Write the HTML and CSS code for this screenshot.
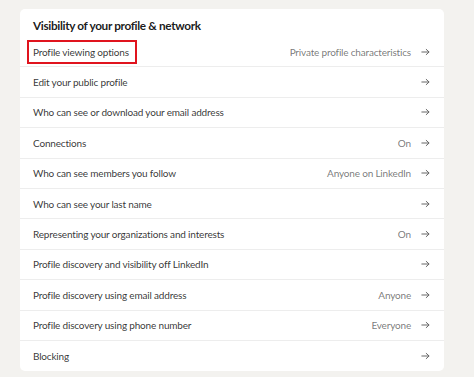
FILE: index.html
```html
<!DOCTYPE html>
<html lang="en">
<head>
    <meta charset="UTF-8">
    <title>Settings: Visibility</title>
    <meta name="viewport" content="width=device-width, initial-scale=1">
    <link rel="stylesheet" href="styles.css">
</head>
<body>

<div class="card">
    <div class="card-title">Visibility of your profile &amp; network</div>
    <ul class="settings">
        <li class="row">
            <span class="label"><span class="highlight">Profile viewing options</span></span>
            <span class="value">Private profile characteristics</span>
            <svg class="arrow" viewBox="0 0 10 8"><path d="M0.5 4H9M5.5 0.8L9 4L5.5 7.2"/></svg>
        </li>
        <li class="row">
            <span class="label">Edit your public profile</span>
            <svg class="arrow" viewBox="0 0 10 8"><path d="M0.5 4H9M5.5 0.8L9 4L5.5 7.2"/></svg>
        </li>
        <li class="row">
            <span class="label">Who can see or download your email address</span>
            <svg class="arrow" viewBox="0 0 10 8"><path d="M0.5 4H9M5.5 0.8L9 4L5.5 7.2"/></svg>
        </li>
        <li class="row">
            <span class="label">Connections</span>
            <span class="value">On</span>
            <svg class="arrow" viewBox="0 0 10 8"><path d="M0.5 4H9M5.5 0.8L9 4L5.5 7.2"/></svg>
        </li>
        <li class="row">
            <span class="label">Who can see members you follow</span>
            <span class="value">Anyone on LinkedIn</span>
            <svg class="arrow" viewBox="0 0 10 8"><path d="M0.5 4H9M5.5 0.8L9 4L5.5 7.2"/></svg>
        </li>
        <li class="row">
            <span class="label">Who can see your last name</span>
            <svg class="arrow" viewBox="0 0 10 8"><path d="M0.5 4H9M5.5 0.8L9 4L5.5 7.2"/></svg>
        </li>
        <li class="row">
            <span class="label">Representing your organizations and interests</span>
            <span class="value">On</span>
            <svg class="arrow" viewBox="0 0 10 8"><path d="M0.5 4H9M5.5 0.8L9 4L5.5 7.2"/></svg>
        </li>
        <li class="row">
            <span class="label">Profile discovery and visibility off LinkedIn</span>
            <svg class="arrow" viewBox="0 0 10 8"><path d="M0.5 4H9M5.5 0.8L9 4L5.5 7.2"/></svg>
        </li>
        <li class="row">
            <span class="label">Profile discovery using email address</span>
            <span class="value">Anyone</span>
            <svg class="arrow" viewBox="0 0 10 8"><path d="M0.5 4H9M5.5 0.8L9 4L5.5 7.2"/></svg>
        </li>
        <li class="row">
            <span class="label">Profile discovery using phone number</span>
            <span class="value">Everyone</span>
            <svg class="arrow" viewBox="0 0 10 8"><path d="M0.5 4H9M5.5 0.8L9 4L5.5 7.2"/></svg>
        </li>
        <li class="row">
            <span class="label">Blocking</span>
            <svg class="arrow" viewBox="0 0 10 8"><path d="M0.5 4H9M5.5 0.8L9 4L5.5 7.2"/></svg>
        </li>
    </ul>
</div>

</body>
</html>
```

FILE: styles.css
```css
* {
    font-family: Lato, "Noto Sans", sans-serif;
    box-sizing: border-box;
}

body {
    background-color: #f3f2ef;
    margin: 0;
    padding: 9px 30px 6px 20px;
}

.card {
    background: #fff;
    border-radius: 5px;
    width: 424px;
}

.card-title {
    height: 28px;
    padding: 9px 13px 0;
    font-size: 11.8px;
    font-weight: 700;
    letter-spacing: -0.35px;
    line-height: 16px;
    color: rgba(0, 0, 0, 0.9);
}

.settings {
    list-style: none;
    margin: 0;
    padding: 0;
}

.row {
    display: flex;
    align-items: center;
    height: 30.4px;
    padding: 0 14px 0 13px;
    border-bottom: 1px solid #ededed;
    font-size: 10px;
    letter-spacing: -0.18px;
    line-height: 14px;
}

.row:last-child {
    border-bottom: none;
}

.label {
    flex: 1;
    color: rgba(0, 0, 0, 0.8);
}

.highlight {
    display: inline-block;
    margin-left: -6px;
    padding: 3px 6px 3px 4px;
    border: 2px solid #e0141e;
}

.value {
    color: rgba(0, 0, 0, 0.55);
    margin-right: 10px;
}

.arrow {
    width: 9px;
    height: 8px;
    fill: none;
    stroke: #666;
    stroke-width: 1.1;
}
```
